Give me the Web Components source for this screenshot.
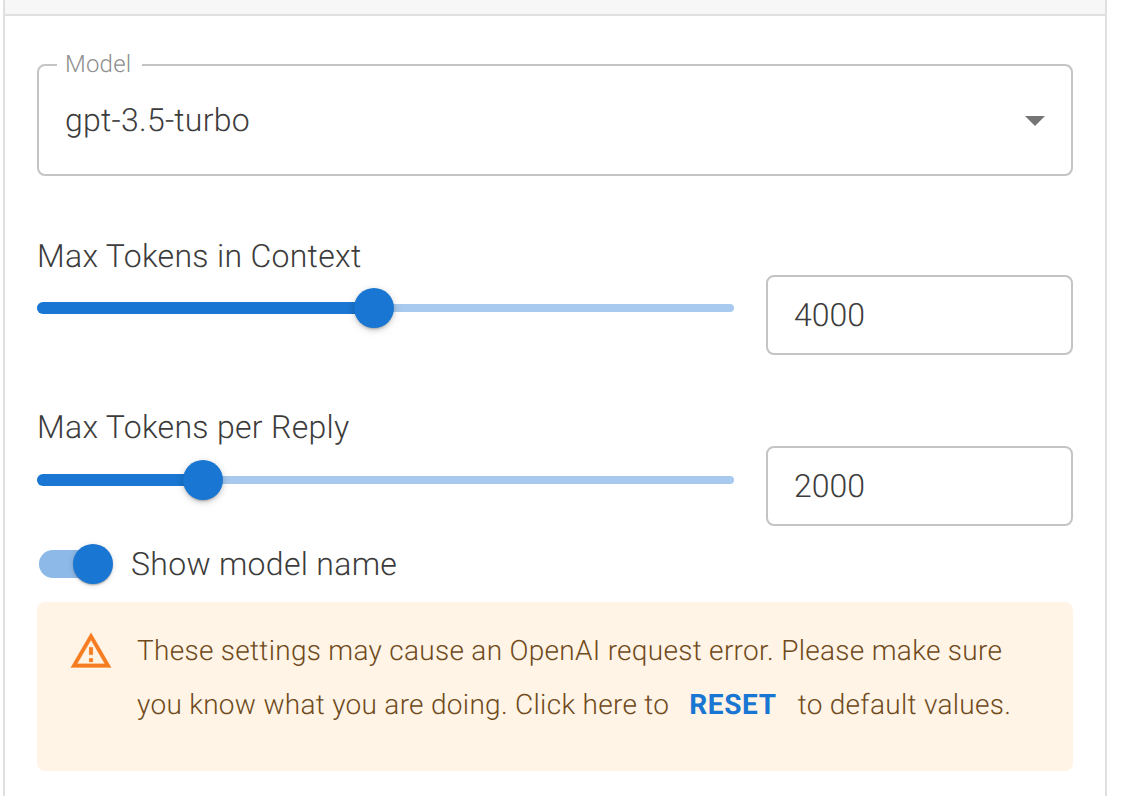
<!DOCTYPE html>
<html>
<head>
<meta charset="utf-8">
<style>
    html, body { margin: 0; padding: 0; background: #fff; }
    body { font-family: Roboto, "Liberation Sans", sans-serif; font-weight: 300; color: #212121; text-rendering: geometricPrecision; }
</style>
</head>
<body>
<settings-panel>
    <model-select label="Model" value="gpt-3.5-turbo"></model-select>
    <token-slider label="Max Tokens in Context" value="4000" percent="48.35" style="margin-top: 61px"></token-slider>
    <token-slider label="Max Tokens per Reply" value="2000" percent="23.8" style="margin-top: 53px; --track-gap: 30px"></token-slider>
    <toggle-row label="Show model name"></toggle-row>
    <warning-box></warning-box>
</settings-panel>

<script>
class SettingsPanel extends HTMLElement {
    constructor() {
        super();
        this.attachShadow({ mode: 'open' });
        this.shadowRoot.innerHTML = `
            <style>
                :host { display: block; width: 1104px; height: 796px; margin-left: 3px; box-sizing: border-box;
                    border-left: 2px solid #e0e0e0; border-right: 2px solid #e0e0e0; overflow: hidden; }
                .head { height: 14px; background: #f7f7f7; border-bottom: 2px solid #e0e0e0; }
                .body { padding: 48px 32px 0; }
            </style>
            <div class="head"></div>
            <div class="body"><slot></slot></div>
        `;
    }
}

class ModelSelect extends HTMLElement {
    constructor() {
        super();
        this.attachShadow({ mode: 'open' });
        this.shadowRoot.innerHTML = `
            <style>
                :host { display: block; position: relative; height: 112px; box-sizing: border-box;
                    border: 2px solid #c4c4c4; border-radius: 8px; }
                .label { position: absolute; left: 18px; top: -16px; padding: 0 11px 0 8px; background: #fff;
                    font-size: 24px; line-height: 28px; letter-spacing: 0.2px; color: #8f8f8f; }
                .row { display: flex; align-items: center; justify-content: space-between; height: 100%;
                    padding: 0 26px 0 26px; font-size: 32px; letter-spacing: 0.25px; color: #3c3c3c; }
                svg { display: block; width: 20px; height: 10px; margin-top: 2px; }
            </style>
            <span class="label">${this.getAttribute('label')}</span>
            <div class="row">
                <span>${this.getAttribute('value')}</span>
                <svg viewBox="0 0 20 10"><path d="M0 0h20L10 10z" fill="#757575"/></svg>
            </div>
        `;
    }
}

class TokenSlider extends HTMLElement {
    constructor() {
        super();
        this.attachShadow({ mode: 'open' });
        const percent = this.getAttribute('percent');
        this.shadowRoot.innerHTML = `
            <style>
                :host { display: grid; grid-template-columns: 697px 307px; column-gap: 32px; align-items: end; }
                .left { align-self: start; }
                .label { font-size: 32px; line-height: 38px; color: #3c3c3c; letter-spacing: 0.3px; white-space: nowrap; }
                .track { position: relative; height: 8px; margin-top: var(--track-gap, 29px); border-radius: 4px; background: #a8caee; }
                .fill { position: absolute; left: 0; top: -2px; height: 12px; border-radius: 6px; background: #1976d2; width: ${percent}%; }
                .thumb { position: absolute; left: ${percent}%; top: 4px; width: 40px; height: 40px; margin: -20px 0 0 -20px;
                    border-radius: 50%; background: #1976d2;
                    box-shadow: 0 3px 2px -2px rgba(0,0,0,.2), 0 2px 4px 0 rgba(0,0,0,.14), 0 2px 10px 0 rgba(0,0,0,.12); }
                .input { box-sizing: border-box; height: 80px; margin-top: 38px; border: 2px solid #c4c4c4; border-radius: 8px;
                    display: flex; align-items: center; padding: 0 26px; font-size: 32px; color: #3c3c3c; }
            </style>
            <div class="left">
                <div class="label">${this.getAttribute('label')}</div>
                <div class="track"><div class="fill"></div><div class="thumb"></div></div>
            </div>
            <div class="input">${this.getAttribute('value')}</div>
        `;
    }
}

class ToggleRow extends HTMLElement {
    constructor() {
        super();
        this.attachShadow({ mode: 'open' });
        this.shadowRoot.innerHTML = `
            <style>
                :host { display: flex; align-items: center; height: 40px; margin-top: 18px; }
                .switch { position: relative; width: 60px; height: 28px; margin-left: 2px; border-radius: 14px; background: #8cb9e8; }
                .knob { position: absolute; right: -14px; top: -6px; width: 40px; height: 40px; border-radius: 50%; background: #1976d2;
                    box-shadow: 0 2px 2px -1px rgba(0,0,0,.2), 0 1px 2px 0 rgba(0,0,0,.14), 0 1px 6px 0 rgba(0,0,0,.12); }
                .label { margin-left: 32px; font-size: 32px; letter-spacing: 0.3px; color: #3c3c3c; white-space: nowrap; }
            </style>
            <div class="switch"><div class="knob"></div></div>
            <span class="label">${this.getAttribute('label')}</span>
        `;
    }
}

class WarningBox extends HTMLElement {
    constructor() {
        super();
        this.attachShadow({ mode: 'open' });
        this.shadowRoot.innerHTML = `
            <style>
                :host { display: flex; box-sizing: border-box; height: 169px; margin-top: 18px; padding: 22px 32px;
                    background: #fff4e5; border-radius: 8px; color: #6f4a1c; }
                svg { flex: none; display: block; width: 44px; height: 44px; margin: 5px 0 0 0; }
                .msg { margin-left: 24px; font-size: 28px; line-height: 54px; letter-spacing: 0.29px; white-space: nowrap; }
                b { display: inline-block; margin: 0 21px 0 20px; font-weight: 700; font-size: 28px; line-height: 54px; color: #1976d2; letter-spacing: 0.6px; }
            </style>
            <svg viewBox="0 0 24 24"><path fill="#f57c20" stroke="#f57c20" stroke-width="0.15" d="M12 5.99 19.53 19H4.47L12 5.99M12 2 1 21h22L12 2zm1 14h-2v2h2v-2zm0-6h-2v4h2v-4z"/></svg>
            <div class="msg">These settings may cause an OpenAI request error. Please make sure<br>you know what you are doing. Click here to<b>RESET</b>to default values.</div>
        `;
    }
}

customElements.define('settings-panel', SettingsPanel);
customElements.define('model-select', ModelSelect);
customElements.define('token-slider', TokenSlider);
customElements.define('toggle-row', ToggleRow);
customElements.define('warning-box', WarningBox);
</script>
</body>
</html>
